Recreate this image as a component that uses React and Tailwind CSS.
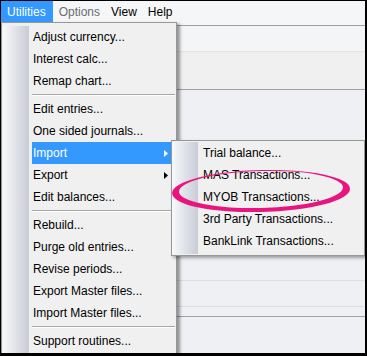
import React from "react";

function Arrow({ white }) {
  return (
    <svg width="4" height="7" viewBox="0 0 4 7" className="shrink-0">
      <polygon points="0,0 4,3.5 0,7" fill={white ? "#ffffff" : "#000000"} />
    </svg>
  );
}

function Item({ label, active, sub }) {
  return (
    <div
      className={
        "ml-[30px] mr-[4px] h-[22px] flex items-center justify-between pl-[1px] pr-[4px] " +
        (active ? "bg-[#3399ff] text-white" : "text-black")
      }
    >
      <span className="whitespace-nowrap">{label}</span>
      {sub ? <Arrow white={active} /> : null}
    </div>
  );
}

function Sep() {
  return (
    <div className="ml-[30px] mr-[1px] h-[6px] flex items-center">
      <div className="w-full h-[2px] border-t border-[#a6a6a6] border-b border-b-white" />
    </div>
  );
}

export default function App() {
  const main = [
    ["Adjust currency..."],
    ["Interest calc..."],
    ["Remap chart..."],
    "sep",
    ["Edit entries..."],
    ["One sided journals..."],
    ["Import", true, true],
    ["Export", false, true],
    ["Edit balances..."],
    "sep",
    ["Rebuild..."],
    ["Purge old entries..."],
    ["Revise periods..."],
    ["Export Master files..."],
    ["Import Master files..."],
    "sep",
    ["Support routines..."],
  ];
  const sub = [
    "Trial balance...",
    "MAS Transactions...",
    "MYOB Transactions...",
    "3rd Party Transactions...",
    "BankLink Transactions...",
  ];
  return (
    <div className="w-[367px] h-[356px] bg-black pl-px pt-px pr-[2px] pb-[3px] font-['Liberation_Sans',Arial,sans-serif] text-[12px] leading-none">
      <div className="relative w-full h-full bg-[#eff0f4] overflow-hidden">
        {/* menu bar */}
        <div className="h-[25px] bg-[#f5f6f7] border-b border-[#a0a0a0] flex items-start">
          <div className="h-[21px] pl-[6px] pr-[7px] flex items-center bg-[#3399ff] text-white">Utilities</div>
          <div className="h-[21px] px-[6px] flex items-center text-[#6d6d6d]">Options</div>
          <div className="h-[21px] px-[5px] flex items-center text-black">View</div>
          <div className="h-[21px] px-[6px] flex items-center text-black">Help</div>
        </div>
        <div className="h-[26px] bg-[#f4f5f7] border-b border-[#e3e4e6]" />
        <div className="h-[38px] bg-[#f0f0f0] border-b border-[#a0a0a0]" />
        <div className="h-[191px] bg-[#eff0f4] border-b border-[#dcdde0]" />
        <div className="h-[26px] bg-[#eff0f4] border-b border-[#dcdde0]" />
        <div className="h-[10px] bg-[#eff0f4] border-b border-[#a0a0a0]" />

        {/* main dropdown */}
        <div className="absolute left-0 top-[21px] w-[176px] bg-[#f0f0f0] border border-[#979797] pt-[3px] pb-[2px] shadow-[3px_2px_3px_rgba(0,0,0,0.4)]">
          <div className="absolute left-[1px] top-[3px] bottom-[1px] w-[26px] bg-gradient-to-r from-[#f8f9fb] to-[#c8ccd6]" />
          <div className="relative">
            {main.map((m, i) =>
              m === "sep" ? (
                <Sep key={i} />
              ) : (
                <Item key={i} label={m[0]} active={m[1]} sub={m[2]} />
              )
            )}
          </div>
        </div>

        {/* submenu */}
        <div className="absolute left-[170px] top-[139px] w-[194px] bg-[#f0f0f0] border border-[#979797] pt-[1px] pb-[3px] shadow-[2px_2px_3px_rgba(0,0,0,0.35)]">
          <div className="absolute left-0 top-[1px] bottom-[1px] w-[26px] bg-gradient-to-r from-[#f8f9fb] to-[#c8ccd6]" />
          <div className="relative">
            {sub.map((s, i) => (
              <Item key={i} label={s} />
            ))}
          </div>
        </div>

        {/* pink annotation ring */}
        <svg
          className="absolute left-0 top-0 pointer-events-none"
          width="364"
          height="352"
          viewBox="1 1 364 352"
        >
          <g transform="rotate(-1.5 261 190)">
            <path
              fillRule="evenodd"
              fill="#e8157f"
              d="M172,191 A89,21 0 1,0 350,191 A89,21 0 1,0 172,191 Z M179,189.5 A82,18.5 0 1,0 343,189.5 A82,18.5 0 1,0 179,189.5 Z"
            />
          </g>
        </svg>
      </div>
    </div>
  );
}
